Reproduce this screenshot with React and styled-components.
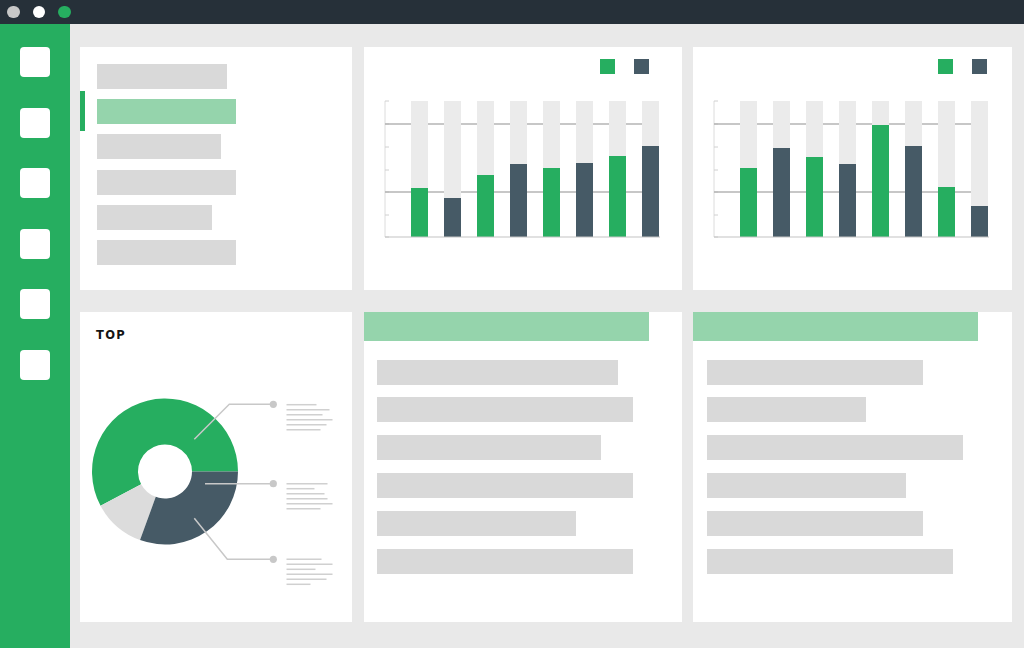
import React from "react";
import styled, { createGlobalStyle } from "styled-components";

const GREEN = "#26ae60";
const LIGHT_GREEN = "#95d4ac";
const DARK = "#465a66";
const BAR_GRAY = "#d9d9d9";

const GlobalStyle = createGlobalStyle`
  html, body {
    margin: 0;
    padding: 0;
    background: #e9e9e9;
    font-family: "Open Sans", "Liberation Sans", sans-serif;
  }
  * { box-sizing: border-box; }
`;

const Frame = styled.div`
  width: 1024px;
  height: 648px;
  display: flex;
  flex-direction: column;
  overflow: hidden;
`;

const TopBar = styled.div`
  height: 24px;
  background: #263039;
  display: flex;
  align-items: center;
  gap: 13px;
  padding-left: 7px;
  flex-shrink: 0;
`;

const Dot = styled.span`
  width: 12.5px;
  height: 12.5px;
  border-radius: 50%;
  background: ${(p) => p.$color};
`;

const Body = styled.div`
  flex: 1;
  display: flex;
`;

const Sidebar = styled.nav`
  width: 70px;
  background: ${GREEN};
  display: flex;
  flex-direction: column;
  align-items: center;
  padding-top: 23px;
  gap: 30.6px;
`;

const NavIcon = styled.div`
  width: 30px;
  height: 30px;
  border-radius: 4px;
  background: #fff;
`;

const Main = styled.main`
  flex: 1;
  display: grid;
  grid-template-columns: 272px 318px 319px;
  grid-template-rows: 243px 310px;
  column-gap: 11.5px;
  row-gap: 22px;
  padding: 23px 0 0 10px;
`;

const Card = styled.section`
  background: #fff;
  position: relative;
`;

/* card 1: menu list */
const MenuList = styled.div`
  display: flex;
  flex-direction: column;
  gap: 10.2px;
  padding: 17px 0 0 17px;
`;

const MenuItem = styled.div`
  height: 25px;
  width: ${(p) => p.$w}px;
  background: ${(p) => (p.$active ? LIGHT_GREEN : BAR_GRAY)};
`;

const ActiveMarker = styled.div`
  position: absolute;
  left: 0;
  top: 44px;
  width: 5px;
  height: 40px;
  background: ${GREEN};
`;

/* bar chart cards */
const Legend = styled.div`
  display: flex;
  justify-content: flex-end;
  gap: 19px;
  padding: 12px ${(p) => p.$pr}px 0 0;
`;

const Swatch = styled.span`
  width: 15px;
  height: 15px;
  background: ${(p) => p.$color};
`;

const ChartWrap = styled.div`
  margin-top: 25px;
  svg { display: block; }
`;

function BarChart({ values }) {
  const top = 2;
  const bottom = 138;
  const ticks = [2, 25, 48, 71, 93, 116, 138];
  return (
    <ChartWrap>
      <svg width="318" height="140" viewBox="0 0 318 140">
        <line x1="21" y1={top} x2="21" y2={bottom} stroke="#dcdcdc" strokeWidth="1" />
        {ticks.map((t) => (
          <line key={t} x1="21" y1={t} x2="25" y2={t} stroke="#d0d0d0" strokeWidth="1" />
        ))}
        <line x1="21" y1="25" x2="280" y2="25" stroke="#b4b4b4" strokeWidth="1.5" />
        <line x1="21" y1="93" x2="280" y2="93" stroke="#b4b4b4" strokeWidth="1.5" />
        {values.map((v, i) => {
          const x = 47 + i * 33;
          return (
            <g key={i}>
              <rect x={x} y={top} width="17" height={bottom - top} fill="#ebebeb" />
              <rect
                x={x}
                y={bottom - v}
                width="17"
                height={v}
                fill={i % 2 === 0 ? GREEN : DARK}
              />
            </g>
          );
        })}
        <line x1="21" y1={bottom} x2="296" y2={bottom} stroke="#c4c4c4" strokeWidth="1.2" />
      </svg>
    </ChartWrap>
  );
}

/* donut card */
const CardTitle = styled.h3`
  margin: 0;
  padding: 16px 0 0 16px;
  font-family: "DejaVu Sans", "Liberation Sans", sans-serif;
  font-size: 11.5px;
  line-height: 14px;
  font-weight: 700;
  letter-spacing: 1.3px;
  color: #151515;
`;

const DonutWrap = styled.div`
  margin-top: 53px;
  svg { display: block; }
`;

const legendGroups = [
  { y: 9.7, widths: [30, 43, 36, 46, 40, 34] },
  { y: 88.7, widths: [41, 28, 38, 41, 46, 34] },
  { y: 164.3, widths: [35, 46, 29, 46, 40, 24] },
];

function Donut() {
  const line = "#c8c8c8";
  return (
    <DonutWrap>
      <svg width="272" height="200" viewBox="0 0 272 200">
        <path
          d="M158,76.5 A73,73 0 1,0 20.55,110.77 L61.16,89.18 A27,27 0 1,1 112,76.5 Z"
          fill={GREEN}
        />
        <path
          d="M20.55,110.77 A73,73 0 0,0 60.03,145.1 L75.77,101.87 A27,27 0 0,1 61.16,89.18 Z"
          fill="#dcdcdc"
        />
        <path
          d="M60.03,145.1 A73,73 0 0,0 158,76.5 L112,76.5 A27,27 0 0,1 75.77,101.87 Z"
          fill={DARK}
        />
        <polyline points="114.3,44.3 149.3,9.3 193.3,9.3" fill="none" stroke={line} strokeWidth="1.5" />
        <polyline points="125,88.7 193.3,88.7" fill="none" stroke={line} strokeWidth="1.5" />
        <polyline points="114.3,123.3 147.3,164.3 193.3,164.3" fill="none" stroke={line} strokeWidth="1.5" />
        <circle cx="193.3" cy="9.3" r="3.6" fill={line} />
        <circle cx="193.3" cy="88.7" r="3.6" fill={line} />
        <circle cx="193.3" cy="164.3" r="3.6" fill={line} />
        {legendGroups.map((g, gi) =>
          g.widths.map((w, i) => (
            <line
              key={`${gi}-${i}`}
              x1="206.5"
              x2={206.5 + w}
              y1={g.y + i * 5}
              y2={g.y + i * 5}
              stroke="#d0d0d0"
              strokeWidth="1.5"
            />
          ))
        )}
      </svg>
    </DonutWrap>
  );
}

/* list cards */
const ListHeader = styled.div`
  width: 285px;
  height: 29px;
  background: ${LIGHT_GREEN};
`;

const Rows = styled.div`
  display: flex;
  flex-direction: column;
  gap: 12.9px;
  padding: 18.5px 0 0 13.5px;
`;

const Row = styled.div`
  height: 25px;
  width: ${(p) => p.$w}px;
  background: ${BAR_GRAY};
`;

const menuWidths = [130, 139, 124, 139, 115, 139];
const listA = [241, 256, 224, 256, 199, 256];
const listB = [216, 159, 256, 199, 216, 246];

export default function App() {
  return (
    <>
      <GlobalStyle />
      <Frame>
        <TopBar>
          <Dot $color="#c8c8c8" />
          <Dot $color="#ffffff" />
          <Dot $color={GREEN} />
        </TopBar>
        <Body>
          <Sidebar>
            {[0, 1, 2, 3, 4, 5].map((i) => (
              <NavIcon key={i} />
            ))}
          </Sidebar>
          <Main>
            <Card>
              <ActiveMarker />
              <MenuList>
                {menuWidths.map((w, i) => (
                  <MenuItem key={i} $w={w} $active={i === 1} />
                ))}
              </MenuList>
            </Card>
            <Card>
              <Legend $pr={33}>
                <Swatch $color={GREEN} />
                <Swatch $color={DARK} />
              </Legend>
              <BarChart values={[49, 39, 62, 73, 69, 74, 81, 91]} />
            </Card>
            <Card>
              <Legend $pr={25}>
                <Swatch $color={GREEN} />
                <Swatch $color={DARK} />
              </Legend>
              <BarChart values={[69, 89, 80, 73, 112, 91, 50, 31]} />
            </Card>
            <Card>
              <CardTitle>TOP</CardTitle>
              <Donut />
            </Card>
            <Card>
              <ListHeader />
              <Rows>
                {listA.map((w, i) => (
                  <Row key={i} $w={w} />
                ))}
              </Rows>
            </Card>
            <Card>
              <ListHeader />
              <Rows>
                {listB.map((w, i) => (
                  <Row key={i} $w={w} />
                ))}
              </Rows>
            </Card>
          </Main>
        </Body>
      </Frame>
    </>
  );
}
